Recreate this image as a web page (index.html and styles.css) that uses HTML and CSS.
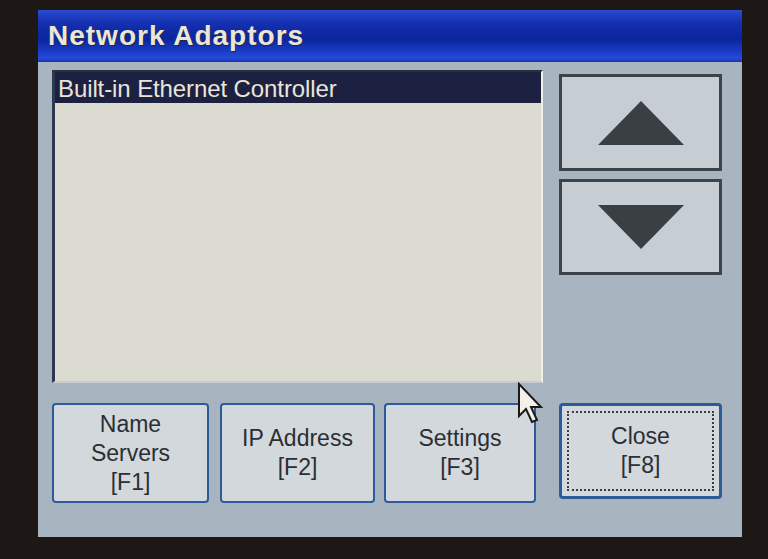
FILE: index.html
```html
<!DOCTYPE html>
<html>
<head>
<meta charset="utf-8">
<link rel="stylesheet" href="styles.css">
</head>
<body>
<div class="screen">
  <div class="titlebar">Network Adaptors</div>
  <div class="client">
    <div class="listbox">
      <div class="item selected">Built-in Ethernet Controller</div>
    </div>
    <div class="scroll">
      <div class="sbtn"><svg width="88" height="46" viewBox="0 0 88 46"><polygon points="44,1 87,45 1,45" fill="#3a3f44"/></svg></div>
      <div class="sbtn"><svg width="88" height="46" viewBox="0 0 88 46"><polygon points="1,1 87,1 44,45" fill="#3a3f44"/></svg></div>
    </div>
    <div class="buttons">
      <div class="btn b1">Name<br>Servers<br>[F1]</div>
      <div class="btn b2">IP Address<br>[F2]</div>
      <div class="btn b3">Settings<br>[F3]</div>
      <div class="btn b4"><div class="focus">Close<br>[F8]</div></div>
    </div>
  </div>
  <svg class="cursor" width="30" height="48" viewBox="0 0 30 48"><path d="M2,2 L2,34 L9,27 L15,40 L20,38 L14,25 L24,25 Z" fill="#f2f0e8" stroke="#1a1a1a" stroke-width="2" stroke-linejoin="miter"/></svg>
</div>
</body>
</html>
```
FILE: styles.css
```css
html, body { margin: 0; padding: 0; }
body {
  width: 768px;
  height: 559px;
  background: #1d1816;
  overflow: hidden;
  font-family: "Liberation Sans", Arial, sans-serif;
}
.screen {
  position: relative;
  margin: 10px 0 0 38px;
  width: 704px;
  height: 527px;
  display: flex;
  flex-direction: column;
}
.titlebar {
  height: 52px;
  flex: none;
  background: linear-gradient(to bottom, #2a4bd0 0%, #1430b0 25%, #0c249c 55%, #1a3cc6 80%, #264cda 92%, #1834b4 100%);
  color: #ebe6d6;
  font-weight: bold;
  font-size: 28px;
  letter-spacing: 1px;
  padding-left: 10px;
  display: flex;
  align-items: center;
  text-shadow: 1px 1px 0 #20264a;
}
.client {
  flex: 1;
  background: #a9b4c1;
  padding: 8px 20px 0 14px;
  display: grid;
  grid-template-columns: 491px 163px;
  grid-template-rows: 313px 100px;
  column-gap: 16px;
  row-gap: 20px;
}
.listbox {
  background: #dcdbd2;
  border-top: 2px solid #2a3038;
  border-left: 3px solid #2a3850;
  border-right: 2px solid #f0f0ea;
  border-bottom: 2px solid #c8ccd0;
}
.item {
  height: 31px;
  line-height: 33px;
  padding-left: 3px;
  font-size: 24px;
  letter-spacing: -0.1px;
}
.selected {
  background: #1c2142;
  color: #e9e5d8;
}
.scroll {
  margin-top: 4px;
  display: flex;
  flex-direction: column;
  gap: 8px;
}
.sbtn {
  height: 97px;
  box-sizing: border-box;
  border: 3px solid #3d4449;
  background: #c6cdd3;
  display: flex;
  align-items: center;
  justify-content: center;
}
.sbtn:last-child { height: 96px; }
.buttons {
  grid-column: 1 / 3;
  display: flex;
}
.btn {
  box-sizing: border-box;
  height: 100px;
  border: 2px solid #2d5a98;
  border-radius: 4px;
  background: #d2d8dc;
  color: #2b2f33;
  font-size: 23px;
  line-height: 29px;
  text-align: center;
  display: flex;
  align-items: center;
  justify-content: center;
}
.b1 { width: 157px; }
.b2 { width: 155px; margin-left: 11px; }
.b3 { width: 152px; margin-left: 9px; }
.b4 {
  width: 163px;
  margin-left: 23px;
  height: 96px;
  border: 3px solid #2d5a98;
  padding: 5px;
  align-items: stretch;
}
.focus {
  flex: 1;
  border: 2px dotted #3a3f44;
  display: flex;
  align-items: center;
  justify-content: center;
}
.cursor {
  position: absolute;
  left: 479px;
  top: 372px;
}
```
